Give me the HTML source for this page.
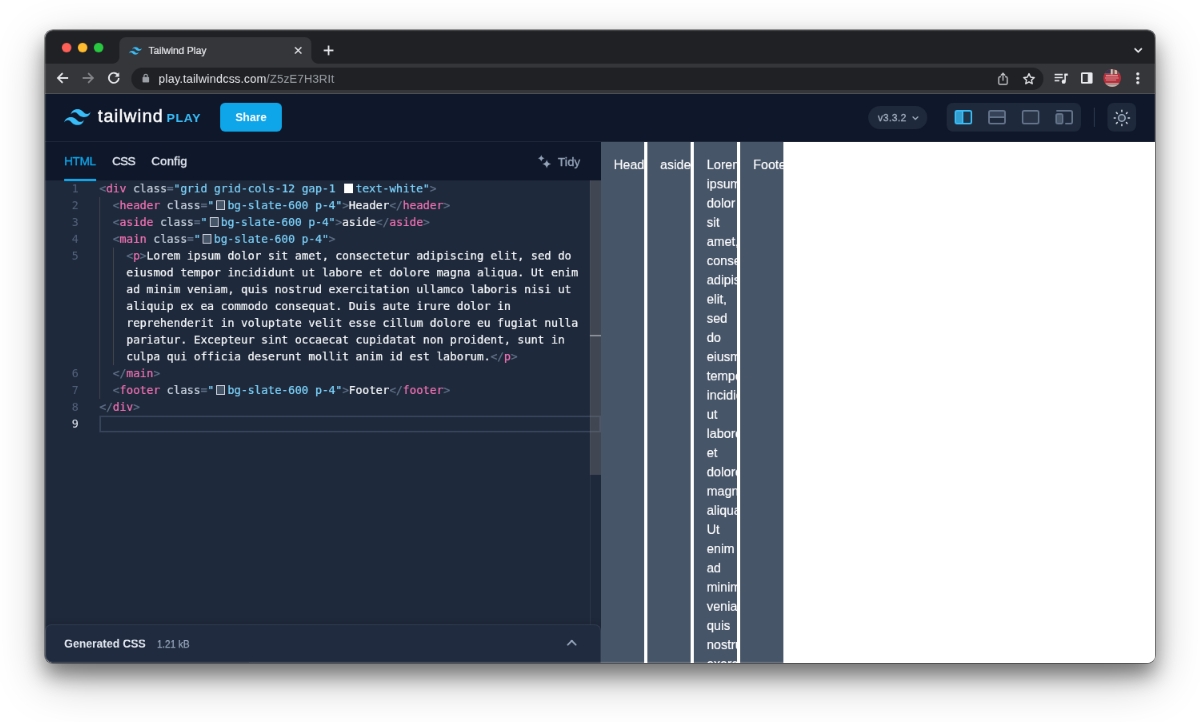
<!DOCTYPE html>
<html lang="en">
<head>
<meta charset="utf-8">
<title>Tailwind Play</title>
<style>
*{box-sizing:border-box;margin:0;padding:0}
html,body{width:1200px;height:722px;overflow:hidden;background:#fff}
body{font-family:"Liberation Sans",sans-serif;position:relative}
#shadow{position:absolute;left:44.8px;top:30.4px;width:1110.4px;height:632.4px;border-radius:8px;
  box-shadow:0 0 0 .8px rgba(0,0,0,.45),0 12px 20px rgba(0,0,0,.43),0 16px 48px rgba(0,0,0,.27);}
#win{position:absolute;left:44.8px;top:30.4px;width:1388px;height:790.5px;transform:scale(.8);transform-origin:0 0;
  border-radius:10px;overflow:hidden;will-change:transform}
.abs{position:absolute}
#ring{position:absolute;left:0;top:0;width:1388px;height:790.5px;border-radius:10px;box-shadow:inset 0 0 0 1.2px rgba(255,255,255,.17);z-index:50;pointer-events:none}
/* chrome frame */
#frame{position:absolute;left:0;top:0;width:1388px;height:42px;background:#202124}
.tl{position:absolute;top:15.5px;width:12px;height:12px;border-radius:50%}
#tab{position:absolute;left:93px;top:8.8px;width:240px;height:33.2px;background:#35363a;border-radius:8px 8px 0 0}
#tab:before,#tab:after{content:"";position:absolute;bottom:0;width:8px;height:8px}
#tab:before{left:-8px;background:radial-gradient(circle at 0 0,transparent 7.5px,#35363a 8px)}
#tab:after{right:-8px;background:radial-gradient(circle at 100% 0,transparent 7.5px,#35363a 8px)}
#tabtitle{position:absolute;left:36.5px;top:10px;font-size:12.5px;line-height:14px;color:#e8eaed;white-space:nowrap;-webkit-text-stroke:.2px}
#toolbar{position:absolute;left:0;top:42px;width:1388px;height:38.2px;background:#35363a;border-bottom:1.8px solid #505256;z-index:5}
#omni{position:absolute;left:108px;top:4.5px;width:1140px;height:28px;border-radius:14px;background:#202124}
#url{position:absolute;left:34px;top:6px;font-size:14.5px;letter-spacing:.18px;line-height:16px;color:#e8eaed;white-space:nowrap}
#url span{color:#9aa0a6}
svg{position:absolute;overflow:visible}
/* app */
#app{position:absolute;left:0;top:79.4px;width:1388px;height:711.4px}
#hdr{position:absolute;left:0;top:0;width:1388px;height:61px;background:#0f172a;border-bottom:1px solid #1e293b}
#share{position:absolute;left:219px;top:12px;width:77px;height:36px;border-radius:6px;background:#0ea5e9;color:#fff;
  font-weight:700;font-size:14px;line-height:36px;text-align:center}
#ver{position:absolute;left:1029px;top:16px;width:74px;height:29px;border-radius:14.5px;background:#1e293b;color:#a3b0c2;
  font-size:12.8px;line-height:29.5px;padding-left:12px;font-weight:400;letter-spacing:.15px;-webkit-text-stroke:.3px}
#lay{position:absolute;left:1127px;top:12px;width:168px;height:36px;border-radius:8px;background:#1e293b}
#div{position:absolute;left:1311px;top:18px;width:1px;height:24px;background:#334155}
#theme{position:absolute;left:1328px;top:12px;width:36px;height:36px;border-radius:8px;background:#1e293b}
/* left pane */
#left{position:absolute;left:0;top:61px;width:695px;height:651px;background:#1e293b}
#tabs{position:absolute;left:0;top:0;width:695px;height:47.6px;background:#0f172a}
.t{position:absolute;top:14px;font-size:15px;line-height:20px;font-weight:400;-webkit-text-stroke:.35px;letter-spacing:.1px;color:#e2e8f0;white-space:nowrap}
#code{position:absolute;left:0;top:47.6px;width:695px;height:555px;font-family:"DejaVu Sans Mono","Liberation Mono",monospace;
  font-size:14px;line-height:21px;color:#f8fafc;white-space:pre;-webkit-text-stroke:.22px}
.ln{position:absolute;left:0;width:42px;text-align:right;color:#516079;-webkit-text-stroke:0}
.cl{position:absolute;left:68px}
.p{color:#64748b}.g{color:#f472b6}.a{color:#cbd5e1}.s{color:#7dd3fc}
.sw{display:inline-block;width:11.2px;height:11.2px;border:1.4px solid #d6dbe3;background:#475569;margin:0 2.8px;vertical-align:-.6px}
.sw.w{background:#fff;border-color:#fff}
#gen{position:absolute;left:0;top:603px;width:694.5px;height:48px;background:#202b3f;border-radius:8px 8px 0 0;
  border:1px solid rgba(148,163,184,.16);border-bottom:0;box-shadow:0 -2px 6px rgba(0,0,0,.10)}
.ln.cur{color:#e2e8f0}
.gd{position:absolute;width:1px;background:#47454d}
.curline{position:absolute;left:68px;width:626.5px;height:21px;border:2px solid #36435a}
#sb{position:absolute;left:681px;top:0;width:14px;height:368px;background:rgba(125,125,125,.36)}
#sbm{position:absolute;left:681px;top:193px;width:14px;height:2px;background:#8a8f98}
/* preview */
#prev{position:absolute;left:695px;top:61px;width:693px;height:651px;background:#fff;overflow:hidden}
.col{position:absolute;top:0;width:54.1px;-webkit-text-stroke:.15px;height:700px;background:#475569;color:#fff;font-size:16px;line-height:24px;padding:17px 16px 16px;white-space:nowrap}
</style>
</head>
<body>
<div id="shadow"></div>
<div id="win">
  <div id="ring"></div>
  <div id="frame">
    <div class="tl" style="left:21px;background:#fe5f57"></div>
    <div class="tl" style="left:41px;background:#febc2e"></div>
    <div class="tl" style="left:61px;background:#28c840"></div>
    <div id="tab">
      <svg style="left:12px;top:9px" width="16" height="16" viewBox="0 0 54 54"><path transform="translate(0 10.8)" fill="#38bdf8" d="M27 0c-7.2 0-11.7 3.6-13.5 10.8 2.7-3.6 5.85-4.95 9.45-4.05 2.054.513 3.522 2.004 5.147 3.653C30.744 13.09 33.808 16.2 40.5 16.2c7.2 0 11.7-3.6 13.5-10.8-2.7 3.6-5.85 4.95-9.45 4.05-2.054-.513-3.522-2.004-5.147-3.653C36.756 3.11 33.692 0 27 0zM13.5 16.2C6.3 16.2 1.8 19.8 0 27c2.7-3.6 5.85-4.95 9.45-4.05 2.054.514 3.522 2.004 5.147 3.653C17.244 29.29 20.308 32.4 27 32.4c7.2 0 11.7-3.6 13.5-10.8-2.7 3.6-5.85 4.95-9.45 4.05-2.054-.513-3.522-2.004-5.147-3.653C23.256 19.31 20.192 16.2 13.5 16.2z"/></svg>
      <div id="tabtitle">Tailwind Play</div>
      <svg style="left:218px;top:11.2px" width="11" height="11" viewBox="0 0 11 11"><path d="M1.5 1.5l8 8M9.5 1.5l-8 8" stroke="#e8eaed" stroke-width="1.6" fill="none"/></svg>
    </div>
    <svg style="left:348px;top:19px" width="13" height="13" viewBox="0 0 13 13"><path d="M6.5 0.5v12M0.5 6.5h12" stroke="#e8eaed" stroke-width="1.9" fill="none"/></svg>
    <svg style="left:1361px;top:22px" width="11" height="7" viewBox="0 0 11 7"><path d="M1 1l4.5 4.5L10 1" stroke="#e8eaed" stroke-width="1.8" fill="none"/></svg>
  </div>
  <div id="toolbar">
    <!-- back -->
    <svg style="left:14px;top:10.1px" width="16" height="16" viewBox="0 0 16 16"><path d="M15 8H2.5M8 2L2 8l6 6" stroke="#e8eaed" stroke-width="1.9" fill="none"/></svg>
    <svg style="left:46px;top:10.1px" width="16" height="16" viewBox="0 0 16 16"><path d="M1 8h12.5M8 2l6 6-6 6" stroke="#85878b" stroke-width="1.9" fill="none"/></svg>
    <svg style="left:78px;top:10.1px" width="16" height="16" viewBox="0 0 16 16"><path d="M13.6 5.2A6.2 6.2 0 1 0 14.2 8" stroke="#e8eaed" stroke-width="1.9" fill="none"/><path d="M14.6 1v5.4H9.2z" fill="#e8eaed"/></svg>
    <div id="omni">
      <svg style="left:13px;top:7.5px" width="10" height="12" viewBox="0 0 12 14"><rect x="1" y="5.5" width="10" height="8" rx="1.2" fill="#9aa0a6"/><path d="M3.4 6V4a2.6 2.6 0 0 1 5.2 0v2" stroke="#9aa0a6" stroke-width="1.5" fill="none"/></svg>
      <div id="url">play.tailwindcss.com<span>/Z5zE7H3RIt</span></div>
      <!-- share -->
      <svg style="left:1083px;top:6.5px" width="13" height="16" viewBox="0 0 13 16"><path d="M4 5.500H2.800a1.600 1.600 0 0 0-1.600 1.600v6.300a1.600 1.600 0 0 0 1.600 1.600h7.400a1.600 1.600 0 0 0 1.600-1.600V7.100a1.600 1.600 0 0 0-1.600-1.600H9M6.500 10.500V1.300M3.800 3.800l2.700-2.700 2.700 2.700" stroke="#c4c7cb" stroke-width="1.500" fill="none"/></svg>
      <!-- star -->
      <svg style="left:1113px;top:5px" width="18" height="18" viewBox="0 0 24 24"><path d="M12 3.500l2.600 5.700 6.200.700-4.600 4.200 1.300 6.100L12 17.100l-5.500 3.100 1.300-6.100-4.600-4.200 6.200-.700z" stroke="#e8eaed" stroke-width="2" fill="none" stroke-linejoin="round"/></svg>
    </div>
    <!-- media -->
    <svg style="left:1261.5px;top:11.5px" width="17" height="13.6" viewBox="0 0 20 16"><path d="M0 2h12M0 6.500h12M0 11h7" stroke="#e8eaed" stroke-width="2" fill="none"/><path d="M15.500 1.500v10" stroke="#e8eaed" stroke-width="2"/><circle cx="13.300" cy="12.300" r="3" fill="#e8eaed"/><path d="M14.500 0.500h5v3h-5z" fill="#e8eaed"/></svg>
    <!-- side panel -->
    <svg style="left:1295px;top:11.2px" width="14.5" height="14" viewBox="0 0 14.5 14"><rect x="0" y="0" width="14.5" height="14" rx="1.6" fill="#e8eaed"/><path d="M2 2h6.600v10H2z" fill="#35363a"/></svg>
    <!-- avatar -->
    <svg style="left:1323px;top:7.1px" width="22" height="22" viewBox="0 0 22 22"><defs><clipPath id="av"><circle cx="11" cy="11" r="11"/></clipPath></defs><g clip-path="url(#av)"><rect width="22" height="22" fill="#b5303c"/><rect x="0" y="0" width="22" height="6" fill="#7a5560"/><rect x="0" y="0" width="9" height="5" fill="#3b3350"/><rect x="9.500" y="0" width="2" height="6.500" fill="#e8dcc0"/><rect x="14" y="1" width="3" height="5" fill="#d9b9a0"/><rect x="3" y="7.500" width="15" height="1.200" fill="#ecc9c9"/><rect x="2" y="10.500" width="17" height="1" fill="#e0a0a4"/><rect x="3" y="13" width="13" height="1" fill="#e0a0a4"/><rect x="0" y="17.500" width="22" height="5" fill="#c9b4a8"/><rect x="4" y="19" width="14" height="1" fill="#8a7f88"/></g></svg>
    <!-- kebab -->
    <svg style="left:1364px;top:10.1px" width="4" height="16" viewBox="0 0 4 16"><circle cx="2" cy="2.800" r="1.900" fill="#e8eaed"/><circle cx="2" cy="8.300" r="1.900" fill="#e8eaed"/><circle cx="2" cy="13.800" r="1.900" fill="#e8eaed"/></svg>
  </div>

  <div id="app">
    <div id="hdr">
      <svg style="left:23.5px;top:19.600px" width="33" height="19.800" viewBox="0 0 54 32.400"><path fill="#38bdf8" d="M27 0c-7.2 0-11.7 3.6-13.5 10.8 2.7-3.6 5.85-4.950 9.450-4.050 2.054.513 3.522 2.004 5.147 3.653C30.744 13.090 33.808 16.200 40.500 16.200c7.200 0 11.700-3.600 13.500-10.800-2.700 3.600-5.850 4.950-9.450 4.050-2.054-.513-3.522-2.004-5.147-3.653C36.756 3.110 33.692 0 27 0zM13.500 16.200C6.300 16.200 1.800 19.800 0 27c2.700-3.600 5.850-4.950 9.450-4.050 2.054.514 3.522 2.004 5.147 3.653C17.244 29.290 20.308 32.400 27 32.400c7.200 0 11.700-3.600 13.500-10.800-2.700 3.600-5.850 4.950-9.450 4.050-2.054-.513-3.522-2.004-5.147-3.653C23.256 19.310 20.192 16.200 13.500 16.200z"/></svg>
      <div class="abs" style="left:66px;top:16px;font-size:22px;line-height:26px;color:#fff;letter-spacing:1.1px;-webkit-text-stroke:.45px;white-space:nowrap">tailwind</div>
      <div class="abs" style="left:152px;top:21.5px;font-size:15.5px;line-height:18px;color:#38bdf8;font-weight:700;letter-spacing:.8px;white-space:nowrap">PLAY</div>
      <div id="share">Share</div>
      <div id="ver">v3.3.2<svg style="left:54.8px;top:12.6px" width="8" height="5" viewBox="0 0 8 5"><path d="M1 .8l3 3 3-3" stroke="#a3b0c2" stroke-width="1.500" fill="none" stroke-linecap="round" stroke-linejoin="round"/></svg></div>
      <div id="lay">
        <svg style="left:0;top:0" width="42" height="36" viewBox="-8 -7 42 36" fill="none" stroke-width="2" stroke-linecap="round" stroke-linejoin="round"><path d="M12 3h9a2 2 0 012 2v12a2 2 0 01-2 2h-9" stroke="#38bdf8" fill="rgba(56,189,248,.08)"/><path d="M3 17V5a2 2 0 012-2h7v16H5a2 2 0 01-2-2z" stroke="#38bdf8" fill="rgba(56,189,248,.8)"/></svg>
        <svg style="left:42px;top:0" width="42" height="36" viewBox="-8 -7 42 36" fill="none" stroke-width="2" stroke-linecap="round" stroke-linejoin="round"><path d="M23 11v6a2 2 0 01-2 2H5a2 2 0 01-2-2v-6" stroke="#64748b"/><path d="M5 3h16a2 2 0 012 2v6H3V5a2 2 0 012-2z" stroke="#64748b" fill="rgba(100,116,139,.35)"/></svg>
        <svg style="left:84px;top:0" width="42" height="36" viewBox="-8 -7 42 36" fill="none" stroke-width="2" stroke-linecap="round" stroke-linejoin="round"><rect x="3" y="3" width="20" height="16" rx="2" stroke="#64748b" fill="rgba(100,116,139,.16)"/></svg>
        <svg style="left:126px;top:0" width="42" height="36" viewBox="-8 -7 42 36" fill="none" stroke-width="2" stroke-linecap="round" stroke-linejoin="round"><path d="M15 19h6a2 2 0 002-2V5a2 2 0 00-2-2H4" stroke="#64748b"/><rect x="3" y="7" width="8" height="12" rx="2" stroke="#64748b" fill="rgba(100,116,139,.6)"/></svg>
      </div>
      <div id="div"></div>
      <div id="theme">
        <svg style="left:6px;top:6.5px" width="24" height="24" viewBox="0 0 24 24" fill="none" stroke-width="1.600" stroke-linecap="round" stroke-linejoin="round"><circle cx="12" cy="12" r="4.200" stroke="#a3b0c4" fill="rgba(148,163,184,.18)"/><path stroke="#dbe2ec" d="M12 2.400v1.600M12 20v1.600M2.400 12h1.600M20 12h1.600M5.200 5.200l1.150 1.150M17.650 17.650l1.150 1.150M18.800 5.200l-1.150 1.150M6.350 17.650l-1.150 1.150"/></svg>
      </div>
    </div>

    <div id="left">
      <div id="tabs">
        <div class="t" style="left:24px;color:#0ea5e9;letter-spacing:-.3px">HTML</div>
        <div class="t" style="left:84px;letter-spacing:-.8px">CSS</div>
        <div class="t" style="left:133px;letter-spacing:.25px">Config</div>
        <div class="abs" style="left:24px;top:46px;width:40px;height:2.4px;background:#0ea5e9;z-index:3"></div>
        <svg style="left:0;top:0" width="695" height="48" viewBox="0 0 695 48"><path fill="#94a3b8" d="M620.3 16.00Q620.94 19.66 624.60 20.3Q620.94 20.95 620.3 24.60Q619.65 20.95 616.00 20.3Q619.65 19.66 620.3 16.00zM627.2 22.10Q628.03 26.78 632.70 27.6Q628.03 28.43 627.2 33.10Q626.38 28.43 621.70 27.6Q626.38 26.78 627.2 22.10z"/></svg>
        <div class="t" style="left:641px;top:14.7px;color:#94a3b8">Tidy</div>
      </div>
      <div id="code">
        <div class="ln" style="top:0px">1</div>
        <div class="cl" style="top:0px"><span class="p">&lt;</span><span class="g">div</span> <span class="a">class</span><span class="p">=</span><span class="s">"grid grid-cols-12 gap-1 </span><span class="sw w"></span><span class="s">text-white"</span><span class="p">&gt;</span></div>
        <div class="ln" style="top:21px">2</div>
        <div class="cl" style="top:21px">  <span class="p">&lt;</span><span class="g">header</span> <span class="a">class</span><span class="p">=</span><span class="s">"</span><span class="sw"></span><span class="s">bg-slate-600 p-4"</span><span class="p">&gt;</span>Header<span class="p">&lt;/</span><span class="g">header</span><span class="p">&gt;</span></div>
        <div class="ln" style="top:42px">3</div>
        <div class="cl" style="top:42px">  <span class="p">&lt;</span><span class="g">aside</span> <span class="a">class</span><span class="p">=</span><span class="s">"</span><span class="sw"></span><span class="s">bg-slate-600 p-4"</span><span class="p">&gt;</span>aside<span class="p">&lt;/</span><span class="g">aside</span><span class="p">&gt;</span></div>
        <div class="ln" style="top:63px">4</div>
        <div class="cl" style="top:63px">  <span class="p">&lt;</span><span class="g">main</span> <span class="a">class</span><span class="p">=</span><span class="s">"</span><span class="sw"></span><span class="s">bg-slate-600 p-4"</span><span class="p">&gt;</span></div>
        <div class="ln" style="top:84px">5</div>
        <div class="cl" style="top:84px">    <span class="p">&lt;</span><span class="g">p</span><span class="p">&gt;</span>Lorem ipsum dolor sit amet, consectetur adipiscing elit, sed do</div>
        <div class="cl" style="top:105px">    eiusmod tempor incididunt ut labore et dolore magna aliqua. Ut enim</div>
        <div class="cl" style="top:126px">    ad minim veniam, quis nostrud exercitation ullamco laboris nisi ut</div>
        <div class="cl" style="top:147px">    aliquip ex ea commodo consequat. Duis aute irure dolor in</div>
        <div class="cl" style="top:168px">    reprehenderit in voluptate velit esse cillum dolore eu fugiat nulla</div>
        <div class="cl" style="top:189px">    pariatur. Excepteur sint occaecat cupidatat non proident, sunt in</div>
        <div class="cl" style="top:210px">    culpa qui officia deserunt mollit anim id est laborum.<span class="p">&lt;/</span><span class="g">p</span><span class="p">&gt;</span></div>
        <div class="ln" style="top:231px">6</div>
        <div class="cl" style="top:231px">  <span class="p">&lt;/</span><span class="g">main</span><span class="p">&gt;</span></div>
        <div class="ln" style="top:252px">7</div>
        <div class="cl" style="top:252px">  <span class="p">&lt;</span><span class="g">footer</span> <span class="a">class</span><span class="p">=</span><span class="s">"</span><span class="sw"></span><span class="s">bg-slate-600 p-4"</span><span class="p">&gt;</span>Footer<span class="p">&lt;/</span><span class="g">footer</span><span class="p">&gt;</span></div>
        <div class="ln" style="top:273px">8</div>
        <div class="cl" style="top:273px"><span class="p">&lt;/</span><span class="g">div</span><span class="p">&gt;</span></div>
        <div class="ln cur" style="top:294px">9</div>
        <div class="gd" style="left:68px;top:21px;height:252px"></div>
        <div class="gd" style="left:85px;top:84px;height:147px"></div>
        <div class="curline" style="top:294px"></div>
        <div class="abs" style="left:680.6px;top:0;width:1px;height:556px;background:rgba(140,150,170,.14)"></div><div id="sb"></div><div id="sbm"></div>
      </div>
      <div id="gen">
        <div class="abs" style="left:23px;top:13px;font-size:14px;line-height:20px;font-weight:700;color:#e2e8f0;white-space:nowrap">Generated CSS</div>
        <div class="abs" style="left:139px;top:15px;font-size:12px;line-height:18px;font-weight:400;-webkit-text-stroke:.25px;color:#94a3b8;white-space:nowrap">1.21 kB</div>
        <svg style="left:651px;top:18px" width="13" height="8" viewBox="0 0 13 8"><path d="M1.500 6.500l5-5 5 5" stroke="#94a3b8" stroke-width="2" fill="none" stroke-linecap="round" stroke-linejoin="round"/></svg>
      </div>
    </div>

    <div id="prev">
      <div class="col" style="left:0">Header</div>
      <div class="col" style="left:58.1px">aside</div>
      <div class="col" style="left:116.2px">Lorem<br>ipsum<br>dolor<br>sit<br>amet,<br>consectetur<br>adipiscing<br>elit,<br>sed<br>do<br>eiusmod<br>tempor<br>incididunt<br>ut<br>labore<br>et<br>dolore<br>magna<br>aliqua.<br>Ut<br>enim<br>ad<br>minim<br>veniam,<br>quis<br>nostrud<br>exercitation<br>ullamco</div>
      <div class="col" style="left:174.3px">Footer</div>
    </div>
  </div>
</div>
</body>
</html>
